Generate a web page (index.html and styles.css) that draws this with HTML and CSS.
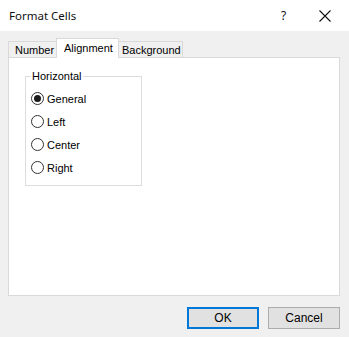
FILE: index.html
```html
<!DOCTYPE html>
<html>
<head>
<meta charset="utf-8">
<link rel="stylesheet" href="styles.css">
</head>
<body>
<div class="dialog">
  <div class="titlebar">
    <span class="title">Format Cells</span>
    <span class="help">?</span>
    <span class="close">
      <svg width="12" height="12" viewBox="0 0 12 12"><path d="M0.5 0.5 L11.5 11.5 M11.5 0.5 L0.5 11.5" stroke="#111" stroke-width="1.1" fill="none"/></svg>
    </span>
  </div>
  <div class="body">
    <div class="tabs">
      <div class="tab tab-number">Number</div>
      <div class="tab tab-active">Alignment</div>
      <div class="tab tab-bg">Background</div>
    </div>
    <div class="panel">
      <fieldset class="group">
        <legend>Horizontal</legend>
        <div class="radio"><span class="circle checked"></span><span>General</span></div>
        <div class="radio"><span class="circle"></span><span>Left</span></div>
        <div class="radio"><span class="circle"></span><span>Center</span></div>
        <div class="radio"><span class="circle"></span><span>Right</span></div>
      </fieldset>
    </div>
    <div class="buttons">
      <div class="btn btn-default">OK</div>
      <div class="btn">Cancel</div>
    </div>
  </div>
</div>
</body>
</html>
```
FILE: styles.css
```css
html, body {
  margin: 0;
  padding: 0;
}
body {
  width: 349px;
  height: 337px;
  background: #f0f0f0;
  font-family: "Liberation Sans", Arial, sans-serif;
  font-size: 11px;
  color: #000;
  overflow: hidden;
}
.dialog {
  width: 349px;
  height: 337px;
}
.titlebar {
  height: 31px;
  background: #fff;
  display: flex;
  align-items: center;
}
.title {
  font-family: "Noto Sans", "Open Sans", sans-serif;
  font-size: 11.5px;
  margin-left: 9px;
  flex: 1;
  color: #111;
}
.help {
  font-family: "Noto Sans", sans-serif;
  font-size: 12px;
  width: 12px;
  margin-right: 26px;
  color: #111;
}
.close {
  display: flex;
  margin-right: 18px;
}
.body {
  padding: 7px 9px 0 8px;
}
.tabs {
  display: flex;
  align-items: flex-end;
  height: 20px;
  position: relative;
  z-index: 2;
}
.tab {
  box-sizing: border-box;
  height: 16px;
  border: 1px solid #d9d9d9;
  border-bottom: none;
  background: #f0f0f0;
  display: flex;
  align-items: center;
  margin-bottom: 1px;
}
.tab-number {
  width: 50px;
  padding-left: 6px;
}
.tab-active {
  height: 20px;
  background: #fff;
  width: 63px;
  padding-left: 7px;
  padding-bottom: 1px;
  margin-left: -2px;
  margin-right: -1px;
  margin-bottom: 0;
}
.tab-bg {
  width: 65px;
  padding-left: 3px;
}
.panel {
  margin-top: -1px;
  height: 237px;
  width: 330px;
  background: #fff;
  border: 1px solid #d9d9d9;
  position: relative;
  z-index: 1;
}
.group {
  box-sizing: border-box;
  margin: 12px 0 0 16px;
  padding: 5px 0 0 5px;
  border: 1px solid #dcdcdc;
  height: 116px;
  width: 117px;
}
.group legend {
  padding: 0 1px;
  margin-left: 0;
  line-height: 12px;
}
.radio {
  display: flex;
  align-items: center;
  height: 23px;
  gap: 3px;
}
.circle {
  width: 11px;
  height: 11px;
  border: 1px solid #333;
  border-radius: 50%;
  background: #fff;
  position: relative;
  flex: none;
}
.circle.checked::after {
  content: "";
  position: absolute;
  left: 2px;
  top: 2px;
  width: 7px;
  height: 7px;
  border-radius: 50%;
  background: #1a1a1a;
}
.buttons {
  display: flex;
  justify-content: flex-end;
  gap: 9px;
  margin-top: 11px;
}
.btn {
  box-sizing: border-box;
  width: 72px;
  height: 22px;
  border: 1px solid #adadad;
  background: #e1e1e1;
  display: flex;
  align-items: center;
  justify-content: center;
  font-size: 12px;
}
.btn-default {
  border: 2px solid #0078d7;
}
```
